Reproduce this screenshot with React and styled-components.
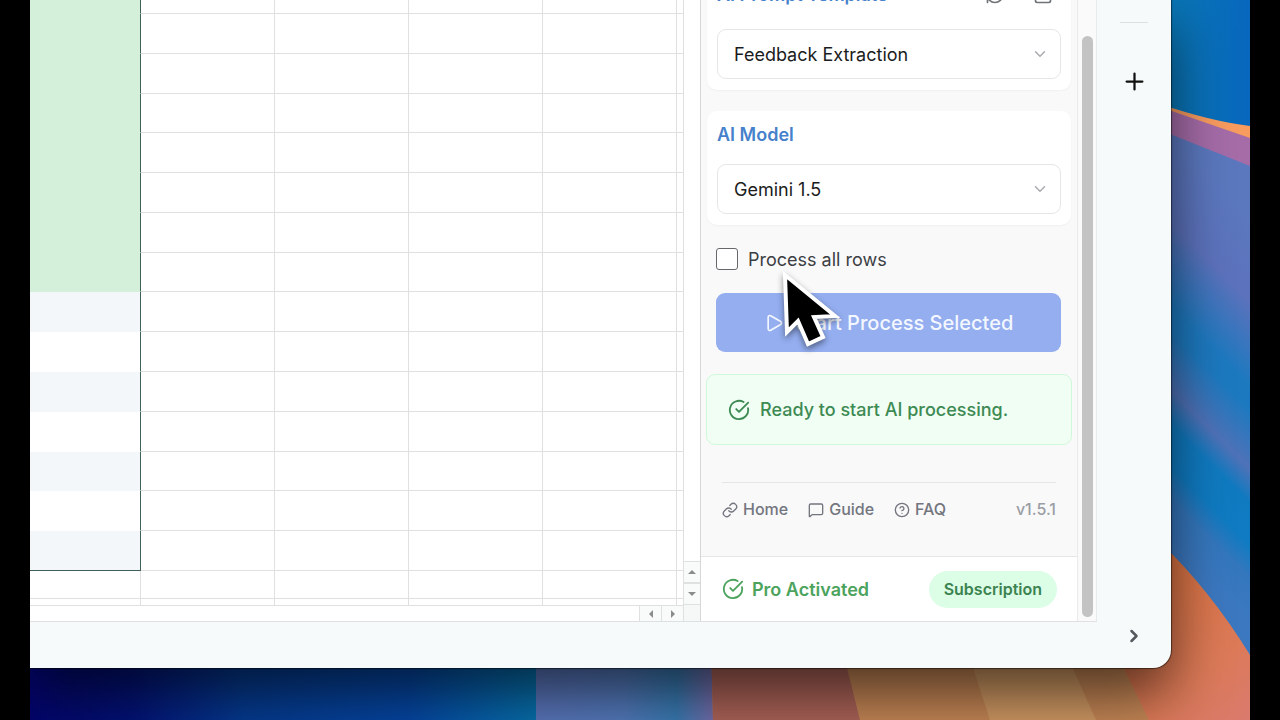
import React from 'react';
import styled, { createGlobalStyle, css } from 'styled-components';
import {
  ChevronDown, ChevronRight, CircleCheckBig, CircleHelp, Link as LinkIcon,
  MessageSquare, Play, Plus, RefreshCw, SquarePen,
} from 'lucide-react';

const GlobalStyle = createGlobalStyle`
  *, *::before, *::after { box-sizing: border-box; }
  html, body, #root { height: 100%; }
  body { margin: 0; background: #000; overflow: hidden; font-family: Inter, "Liberation Sans", sans-serif; }
  button, select, input { font: inherit; }
`;

const line = '#dfe0e0';

const Screen = styled.div`
  height: 100%;
  padding: 0 30px;
  background: #000;
`;

const Desktop = styled.div`
  position: relative;
  display: flex;
  height: 100%;
  padding: 0 79px 52px 0;
  overflow: hidden;
`;

const WallpaperSvg = styled.svg`
  position: absolute;
  inset: 0;
  width: 100%;
  height: 100%;
`;

const Window = styled.main`
  position: relative;
  display: flex;
  flex: 1;
  min-width: 0;
  background: #f7fafb;
  border-radius: 0 0 18px 0;
  box-shadow: 0 0 1px 1px rgba(0, 0, 0, 0.5), 0 26px 56px rgba(0, 0, 0, 0.6);
`;

const Workspace = styled.div`
  display: flex;
  flex: 1;
  min-width: 0;
  margin-bottom: 46px;
  background: #fff;
  border-bottom: 1px solid ${line};
  overflow: hidden;
`;

const SheetArea = styled.section`
  display: flex;
  flex-direction: column;
  flex: 1;
  min-width: 0;
`;

const GridFrame = styled.div`
  flex: 1;
  min-height: 0;
`;

const Grid = styled.table`
  width: 100%;
  height: 100%;
  table-layout: fixed;
  border-collapse: separate;
  border-spacing: 0;
`;

const Col = styled.col`
  width: ${(p) => (p.$w ? `${p.$w}px` : 'auto')};
`;

const Row = styled.tr`
  height: ${(p) => (p.$h ? `${p.$h}px` : 'auto')};
`;

const fills = { green: '#d5f0da', tint: '#f3f7f9', plain: '#fff' };

const Cell = styled.td`
  padding: 0;
  border-right: 1px solid ${line};
  border-bottom: 1px solid ${line};
  ${(p) => p.$fill && css`
    background: ${fills[p.$fill]};
    border-right-color: #3f6058;
    border-bottom-color: ${p.$last ? '#3f6058' : fills[p.$fill]};
  `}
`;

const HorizontalBar = styled.div`
  display: flex;
  justify-content: flex-end;
  height: 15px;
  border-right: 1px solid ${line};
`;

const VerticalBar = styled.div`
  display: flex;
  flex-direction: column;
  justify-content: flex-end;
  width: 16px;
`;

const Corner = styled.div`
  height: 16px;
  background: #f6f7f7;
`;

const ArrowButton = styled.button`
  display: grid;
  place-items: center;
  width: ${(p) => (p.$vertical ? 'auto' : '22px')};
  height: ${(p) => (p.$vertical ? '22px' : 'auto')};
  padding: 0;
  background: #f9fafa;
  border: 0 solid ${line};
  border-width: ${(p) => (p.$vertical ? '1px 0' : '0 0 0 1px')};
  color: #8b8b8b;
`;

const Sidebar = styled.aside`
  display: flex;
  flex-direction: column;
  justify-content: flex-end;
  width: 377px;
  border-left: 1px solid #d6d7d8;
  background: #f9f9fa;
  overflow: hidden;
`;

const Body = styled.div`
  display: flex;
  flex-direction: column;
  flex-shrink: 0;
  padding: 0 6px;
`;

const Card = styled.section`
  margin-bottom: 21px;
  padding: 12px 10px 11px;
  background: #fff;
  border-radius: 10px;
  box-shadow: 0 1px 2px rgba(0, 0, 0, 0.04);
`;

const CardHeader = styled.div`
  display: flex;
  align-items: center;
  justify-content: space-between;
  height: ${(p) => (p.$tools ? '32px' : '24px')};
  margin-bottom: ${(p) => (p.$tools ? '18px' : '17px')};
`;

const CardTitle = styled.label`
  color: #4681cb;
  font-size: 18px;
  font-weight: 600;
  line-height: 24px;
`;

const Tools = styled.div`
  display: flex;
  gap: 28px;
  padding-right: 8px;
`;

const IconButton = styled.button`
  display: grid;
  place-items: center;
  padding: 0;
  border: 0;
  background: none;
  color: ${(p) => p.$color || '#6f7378'};
`;

const SelectBox = styled.div`
  position: relative;
  svg {
    position: absolute;
    right: 12px;
    top: 16px;
    color: #a9abae;
    pointer-events: none;
  }
`;

const Select = styled.select`
  display: block;
  appearance: none;
  width: 100%;
  height: 50px;
  padding: 0 40px 0 16px;
  background: #fff;
  border: 1px solid #e5e6e8;
  border-radius: 9px;
  color: #1b1c20;
  font-size: 18px;
`;

const CheckLabel = styled.label`
  display: flex;
  align-items: center;
  gap: 10px;
  height: 22px;
  margin: 2px 10px 23px 9px;
  color: #3c3e43;
  font-size: 18px;
`;

const Checkbox = styled.input`
  appearance: none;
  width: 22px;
  height: 22px;
  margin: 0;
  background: #fff;
  border: 1px solid #66686c;
  border-radius: 3px;
`;

const StartWrap = styled.div`
  position: relative;
  margin: 0 10px 22px 9px;
`;

const StartButton = styled.button`
  display: flex;
  align-items: center;
  justify-content: center;
  gap: 12px;
  width: 100%;
  height: 59px;
  border: 0;
  border-radius: 9px;
  background: #94aef0;
  color: #f3f7ff;
  font-size: 20px;
  font-weight: 500;
`;

const Pointer = styled.svg`
  position: absolute;
  left: 61px;
  top: -27px;
  overflow: visible;
  filter: drop-shadow(0 3px 3px rgba(0, 0, 0, 0.45));
  pointer-events: none;
`;

const Notice = styled.p`
  display: flex;
  align-items: center;
  gap: 10px;
  height: 71px;
  margin: 0 -1px 37px;
  padding: 0 21px;
  background: #f0fef3;
  border: 1px solid #d0f8da;
  border-radius: 9px;
  color: #3d8a53;
  font-size: 18px;
  font-weight: 500;
`;

const LinkBar = styled.nav`
  display: flex;
  align-items: center;
  gap: 20px;
  margin: 0 15px 36px;
  padding-top: 16px;
  border-top: 1px solid #e5e6e8;
`;

const FootLink = styled.a`
  display: flex;
  align-items: center;
  gap: 5px;
  color: #73767e;
  font-size: 16px;
  font-weight: 500;
  line-height: 21px;
  text-decoration: none;
`;

const Version = styled.span`
  margin-left: auto;
  color: #9b9ea5;
  font-size: 16px;
  font-weight: 500;
  line-height: 21px;
`;

const PlanBar = styled.footer`
  display: flex;
  align-items: center;
  justify-content: space-between;
  flex-shrink: 0;
  height: 65px;
  padding: 0 20px 0 21px;
  background: #fff;
  border-top: 1px solid #e5e6e8;
`;

const Plan = styled.span`
  display: flex;
  align-items: center;
  gap: 8px;
  color: #4ba35d;
  font-size: 18px;
  font-weight: 600;
`;

const PlanButton = styled.button`
  height: 37px;
  padding: 0 15px;
  border: 0;
  border-radius: 19px;
  background: #dcfde6;
  color: #3b8350;
  font-size: 16px;
  font-weight: 600;
`;

const ScrollTrack = styled.div`
  display: flex;
  flex-direction: column;
  width: 20px;
  padding: 36px 3px 4px 4px;
  background: #fafafb;
  border: 0 solid #e9eaeb;
  border-width: 0 1px;
`;

const ScrollThumb = styled.div`
  flex: 1;
  border-radius: 6px;
  background: #c3c3c3;
`;

const Rail = styled.div`
  display: flex;
  flex-direction: column;
  align-items: center;
  width: 74px;
  padding: 22px 0 22px;
`;

const RailDivider = styled.hr`
  width: 28px;
  margin: 0 0 45px;
  border: 0;
  border-top: 1px solid #dddfe1;
`;

const Spacer = styled.div`
  flex: 1;
`;

const rows = [
  { h: 14, fill: 'green' },
  ...Array(7).fill({ fill: 'green' }),
  { fill: 'tint' }, { fill: 'plain' }, { fill: 'tint' }, { fill: 'plain' },
  { fill: 'tint' }, { fill: 'plain' }, { fill: 'tint', last: true },
  { h: 28 }, { h: 7 },
];

const columns = [111, 134, 134, 134, 134, null];

function Triangle({ rotate = 0 }) {
  return (
    <svg width="8" height="8" viewBox="0 0 8 8" aria-hidden="true">
      <path d="M4 2 8 6H0Z" fill="currentColor" transform={`rotate(${rotate} 4 4)`} />
    </svg>
  );
}

function Wallpaper() {
  return (
    <WallpaperSvg viewBox="0 0 1220 720" preserveAspectRatio="xMaxYMax slice" aria-hidden="true">
      <defs>
        <linearGradient id="deep" x1="0" x2="506" y1="0" y2="0" gradientUnits="userSpaceOnUse">
          <stop offset="0" stopColor="#03046c" />
          <stop offset="0.2" stopColor="#031276" />
          <stop offset="0.42" stopColor="#053a90" />
          <stop offset="0.75" stopColor="#0546a2" />
          <stop offset="1" stopColor="#0770ac" />
        </linearGradient>
        <linearGradient id="dusk" x1="506" x2="681" y1="0" y2="0" gradientUnits="userSpaceOnUse">
          <stop offset="0" stopColor="#5a75bb" />
          <stop offset="0.5" stopColor="#5279bb" />
          <stop offset="0.8" stopColor="#387ab2" />
          <stop offset="1" stopColor="#706eac" />
        </linearGradient>
        <linearGradient id="sky" x1="1141" x2="1220" y1="0" y2="0" gradientUnits="userSpaceOnUse">
          <stop offset="0" stopColor="#0a78b8" />
          <stop offset="1" stopColor="#0867bd" />
        </linearGradient>
        <linearGradient id="folds" x1="1141" x2="931" y1="130" y2="340" gradientUnits="userSpaceOnUse">
          <stop offset="0" stopColor="#5b78be" />
          <stop offset="0.22" stopColor="#5c72bc" />
          <stop offset="0.42" stopColor="#1d79bf" />
          <stop offset="0.48" stopColor="#1d79bf" />
          <stop offset="0.62" stopColor="#4f72b8" />
          <stop offset="0.7" stopColor="#107ac0" />
          <stop offset="0.8" stopColor="#0f7bc2" />
          <stop offset="0.88" stopColor="#3477bd" />
          <stop offset="1" stopColor="#3c78c0" />
        </linearGradient>
        <linearGradient id="ember" x1="1110" x2="1220" y1="600" y2="720" gradientUnits="userSpaceOnUse">
          <stop offset="0" stopColor="#d87243" />
          <stop offset="0.6" stopColor="#dc7a58" />
          <stop offset="1" stopColor="#da7a6e" />
        </linearGradient>
      </defs>
      <rect x="-1000" y="600" width="1508" height="120" fill="url(#deep)" />
      <rect x="506" y="600" width="178" height="120" fill="url(#dusk)" />
      <path d="M680 600H1160V720H683Z" fill="#c58655" />
      <path d="M680 600H800L830 720H683Z" fill="#ac6358" />
      <path d="M934 640H1030L1066 720H960Z" fill="#cf9863" />
      <rect x="1130" y="0" width="90" height="140" fill="url(#sky)" />
      <path d="M1130 130L1220 160V660H1130Z" fill="url(#folds)" />
      <path d="M1130 106L1220 136V166L1130 130Z" fill="#a56ca8" />
      <path d="M1130 104Q1180 121 1220 126V138L1130 107Z" fill="#f79b5f" />
      <path d="M1130 542Q1180 590 1220 655V720H1119L1080 640H1130Z" fill="url(#ember)" />
    </WallpaperSvg>
  );
}

function Spreadsheet() {
  return (
    <>
      <SheetArea>
        <GridFrame>
          <Grid aria-label="Sheet">
            <colgroup>{columns.map((w, i) => <Col key={i} $w={w} />)}</colgroup>
            <tbody>
              {rows.map((row, r) => (
                <Row key={r} $h={row.h}>
                  {columns.map((_, c) => (
                    <Cell key={c} $fill={c === 0 ? row.fill : undefined} $last={row.last} />
                  ))}
                </Row>
              ))}
            </tbody>
          </Grid>
        </GridFrame>
        <HorizontalBar>
          <ArrowButton aria-label="Scroll left"><Triangle rotate={-90} /></ArrowButton>
          <ArrowButton aria-label="Scroll right"><Triangle rotate={90} /></ArrowButton>
        </HorizontalBar>
      </SheetArea>
      <VerticalBar>
        <ArrowButton $vertical aria-label="Scroll up"><Triangle /></ArrowButton>
        <ArrowButton $vertical aria-label="Scroll down"><Triangle rotate={180} /></ArrowButton>
        <Corner />
      </VerticalBar>
    </>
  );
}

function AddOnPanel() {
  return (
    <Sidebar>
      <Body>
        <Card>
          <CardHeader $tools>
            <CardTitle htmlFor="template">AI Prompt Template</CardTitle>
            <Tools>
              <IconButton aria-label="Refresh"><RefreshCw size={20} strokeWidth={2} /></IconButton>
              <IconButton aria-label="Edit"><SquarePen size={20} strokeWidth={2} /></IconButton>
            </Tools>
          </CardHeader>
          <SelectBox>
            <Select id="template"><option>Feedback Extraction</option></Select>
            <ChevronDown size={18} />
          </SelectBox>
        </Card>
        <Card>
          <CardHeader>
            <CardTitle htmlFor="model">AI Model</CardTitle>
          </CardHeader>
          <SelectBox>
            <Select id="model"><option>Gemini 1.5</option></Select>
            <ChevronDown size={18} />
          </SelectBox>
        </Card>
        <CheckLabel>
          <Checkbox type="checkbox" />
          Process all rows
        </CheckLabel>
        <StartWrap>
          <StartButton>
            <Play size={20} />
            Start Process Selected
          </StartButton>
          <Pointer width="64" height="84" viewBox="0 0 64 84" aria-hidden="true">
            <path
              d="M8 9 10 66 21 55 31 78 46 71 37 51 58 50Z"
              fill="#000" stroke="#fff" strokeWidth="4" strokeLinejoin="miter"
            />
          </Pointer>
        </StartWrap>
        <Notice>
          <CircleCheckBig size={22} strokeWidth={2} />
          Ready to start AI processing.
        </Notice>
        <LinkBar>
          <FootLink href="#home"><LinkIcon size={16} />Home</FootLink>
          <FootLink href="#guide"><MessageSquare size={16} />Guide</FootLink>
          <FootLink href="#faq"><CircleHelp size={16} />FAQ</FootLink>
          <Version>v1.5.1</Version>
        </LinkBar>
      </Body>
      <PlanBar>
        <Plan><CircleCheckBig size={22} />Pro Activated</Plan>
        <PlanButton>Subscription</PlanButton>
      </PlanBar>
    </Sidebar>
  );
}

export default function App() {
  return (
    <Screen>
      <GlobalStyle />
      <Desktop>
        <Wallpaper />
        <Window>
          <Workspace>
            <Spreadsheet />
            <AddOnPanel />
            <ScrollTrack><ScrollThumb /></ScrollTrack>
          </Workspace>
          <Rail>
            <RailDivider />
            <IconButton $color="#111" aria-label="Get add-ons"><Plus size={27} strokeWidth={2} /></IconButton>
            <Spacer />
            <IconButton $color="#55585c" aria-label="Hide side panel"><ChevronRight size={20} strokeWidth={3} /></IconButton>
          </Rail>
        </Window>
      </Desktop>
    </Screen>
  );
}
